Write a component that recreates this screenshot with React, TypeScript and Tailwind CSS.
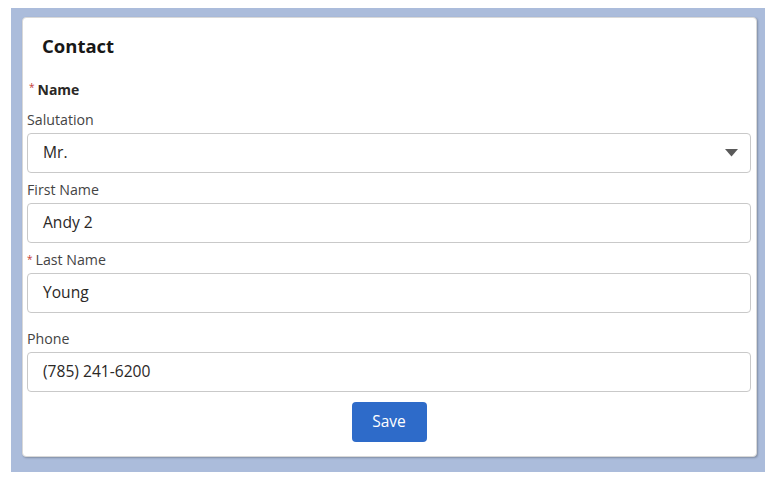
export default function App() {
  const font = { fontFamily: '"Open Sans", "Noto Sans", sans-serif' };

  const Field = ({
    label,
    value,
    required,
    select,
    className = "",
  }: {
    label: string;
    value: string;
    required?: boolean;
    select?: boolean;
    className?: string;
  }) => (
    <div className={className}>
      <div className="h-5 flex items-center text-[14.2px] text-[#444444] leading-5">
        {required && <span className="text-[#c23934] text-[10px] mr-[3px] -mt-[3px]">*</span>}
        {label}
      </div>
      <div className="mt-[3px] h-10 rounded-[4px] border border-[#c9c9c9] bg-white flex items-center justify-between pl-[15px] pr-3 text-[15.6px] text-[#2b2826]">
        <span>{value}</span>
        {select && (
          <svg width="13" height="8" viewBox="0 0 13 8">
            <path d="M0 0 L13 0 L6.5 7.5 Z" fill="#5a5a5a" />
          </svg>
        )}
      </div>
    </div>
  );

  return (
    <div className="w-[768px] h-[478px] bg-white pt-2 pl-[11px]" style={font}>
      <div className="w-[754px] h-[464px] bg-[#abbcdb] pt-[9px] pl-[11px]">
        <div className="w-[735px] h-[440px] bg-white rounded-[4px] border border-[#d8d8d8] shadow-[1px_1px_2px_rgba(0,0,0,0.25)] pt-4 pl-[4px] pr-[5px] flex flex-col">
          <div className="pl-[15px] h-6 leading-6 text-[18.5px] font-bold text-[#181818]">Contact</div>
          <div className="mt-[21px] h-5 flex items-center text-[14px] font-bold text-[#2b2826] pl-[2px]">
            <span className="text-[#c23934] text-[10px] mr-[3px] -mt-[3px] font-normal">*</span>
            Name
          </div>
          <Field className="mt-[11px]" label="Salutation" value="Mr." select />
          <Field className="mt-[7px]" label="First Name" value="Andy 2" />
          <Field className="mt-[7px]" label="Last Name" value="Young" required />
          <Field className="mt-4" label="Phone" value="(785) 241-6200" />
          <div className="mt-[10px] flex justify-center">
            <button className="w-[75px] h-10 rounded-[4px] bg-[#2e6bc9] text-white text-[15.5px]">Save</button>
          </div>
        </div>
      </div>
    </div>
  );
}
